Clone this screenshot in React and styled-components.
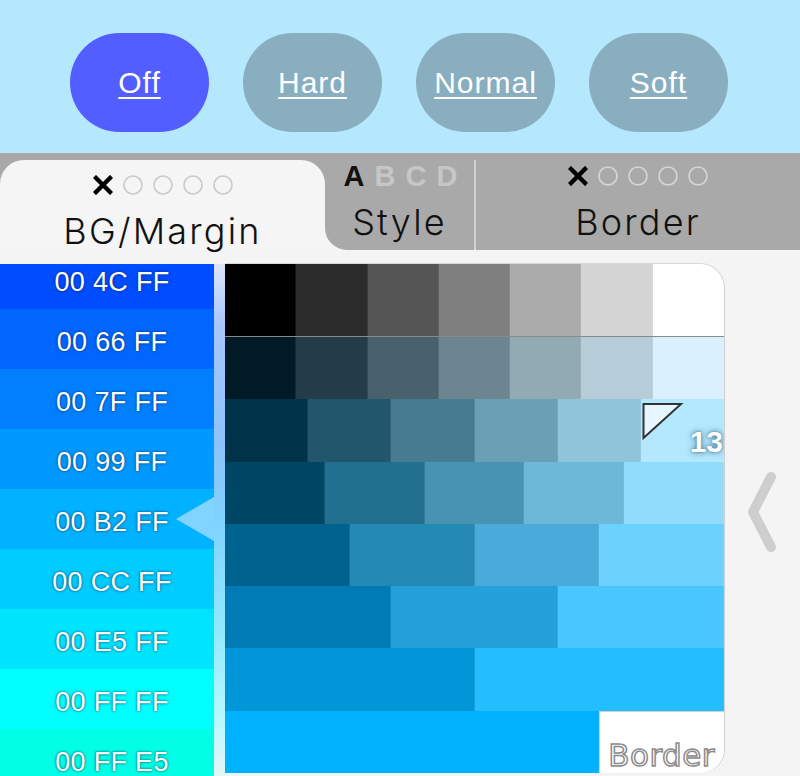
import styled, { createGlobalStyle } from 'styled-components';

const GlobalStyle = createGlobalStyle`
  html, body { margin: 0; padding: 0; }
  body {
    font-family: "Liberation Sans", Arial, sans-serif;
    background: #f4f4f4;
  }
`;

const modes = ['Off', 'Hard', 'Normal', 'Soft'];

const swatches = ['4C', '66', '7F', '99', 'B2', 'CC', 'E5', 'FF', 'FF'];
const listColors = ['#004cff', '#0066ff', '#007fff', '#0099ff', '#00b2ff', '#00ccff', '#00e5ff', '#00ffff', '#00ffe5'];

const rows = [
  ['#000000', '#2b2c2b', '#555555', '#7f7f7f', '#aaaaaa', '#d4d4d4', '#ffffff'],
  ['#011a26', '#243c49', '#48616d', '#6c8590', '#92aab4', '#b6cdd9', '#daf1fd'],
  ['#003249', '#21566d', '#467b91', '#6aa0b6', '#8fc4db', '#b3e8fe'],
  ['#004766', '#22708f', '#4793b2', '#6cb8d8', '#90dcfd'],
  ['#00628f', '#2489b5', '#49abd9', '#6dd1fe'],
  ['#007bb5', '#25a0da', '#4ac6fe'],
  ['#0096d8', '#24bdfe'],
];

function XMark() {
  return (
    <svg width="20" height="20" viewBox="0 0 20 20">
      <path d="M3 3 L17 17 M17 3 L3 17" stroke="#000" strokeWidth="4.4" strokeLinecap="square" />
    </svg>
  );
}

function Ring({ color }) {
  return (
    <svg width="20" height="20" viewBox="0 0 20 20">
      <circle cx="10" cy="10" r="9" fill="none" stroke={color} strokeWidth="1.6" />
    </svg>
  );
}

function Dots({ ring }) {
  return (
    <DotRow>
      <XMark />
      {[0, 1, 2, 3].map((i) => <Ring key={i} color={ring} />)}
    </DotRow>
  );
}

export default function App() {
  return (
    <Page>
      <GlobalStyle />
      <Header>
        {modes.map((m, i) => (
          <ModeButton key={m} $active={i === 0}>{m}</ModeButton>
        ))}
      </Header>

      <TabBar>
        <ActiveTab>
          <Dots ring="#c9c9c9" />
          <TabLabel>BG/Margin</TabLabel>
        </ActiveTab>
        <StyleTab>
          <Letters>
            <Letter $on>A</Letter>
            <Letter>B</Letter>
            <Letter>C</Letter>
            <Letter>D</Letter>
          </Letters>
          <TabLabel>Style</TabLabel>
        </StyleTab>
        <Divider />
        <BorderTab>
          <Dots ring="#d6d6d6" />
          <TabLabel>Border</TabLabel>
        </BorderTab>
      </TabBar>

      <Content>
        <List>
          <ListInner>
            {swatches.map((s, i) => (
              <ListRow key={i} $bg={listColors[i]}>
                {i === 8 ? '00 FF E5' : `00 ${s} FF`}
              </ListRow>
            ))}
          </ListInner>
        </List>
        <Strip>
          <Pointer />
        </Strip>

        <Palette>
          {rows.map((row, r) => (
            <PaletteRow key={r} $first={r === 0}>
              {row.map((c, k) => (
                <Cell key={c} $bg={c}>
                  {r === 2 && k === 5 && (
                    <>
                      <Marker width="44" height="40" viewBox="0 0 44 40">
                        <path d="M2.5 4 L40 4 L2.5 38 Z" fill="#e6f6ff" stroke="#333" strokeWidth="2" strokeLinejoin="miter" />
                      </Marker>
                      <Count>13</Count>
                    </>
                  )}
                </Cell>
              ))}
            </PaletteRow>
          ))}
          <PaletteRow>
            <Cell $bg="#00b1fe" $grow={3} />
            <BorderCell>Border</BorderCell>
          </PaletteRow>
        </Palette>

        <Side>
          <svg width="34" height="90" viewBox="0 0 34 90">
            <polyline points="26,10 8,45 26,80" fill="none" stroke="#cecece" strokeWidth="10" strokeLinecap="round" strokeLinejoin="round" />
          </svg>
        </Side>
      </Content>
    </Page>
  );
}

const Page = styled.div`
  width: 800px;
  height: 776px;
  overflow: hidden;
  display: flex;
  flex-direction: column;
  background: #f4f4f4;
`;

const Header = styled.div`
  height: 153px;
  flex: none;
  box-sizing: border-box;
  background: #b6e8fd;
  display: flex;
  justify-content: center;
  align-items: flex-start;
  gap: 34px;
  padding: 33px 2px 0 0;
`;

const ModeButton = styled.div`
  width: 139px;
  height: 99px;
  border-radius: 50px;
  background: ${(p) => (p.$active ? '#525eff' : '#88aebf')};
  color: #fff;
  display: flex;
  align-items: center;
  justify-content: center;
  font-size: 30px;
  letter-spacing: 1px;
  text-decoration: underline;
  text-decoration-thickness: 2px;
  text-underline-offset: 4px;
`;

const TabBar = styled.div`
  height: 97px;
  flex: none;
  display: flex;
  background: linear-gradient(#a9a9a9 50%, #f5f5f5 50%);
`;

const ActiveTab = styled.div`
  width: 325px;
  margin-top: 7px;
  border-radius: 24px 24px 0 0;
  background: #f5f5f5;
  display: flex;
  flex-direction: column;
  align-items: center;
  padding-top: 15px;
  box-sizing: border-box;
`;

const StyleTab = styled.div`
  width: 149px;
  background: #a9a9a9;
  border-bottom-left-radius: 22px;
  display: flex;
  flex-direction: column;
  align-items: center;
  padding-top: 13px;
  box-sizing: border-box;
`;

const Divider = styled.div`
  width: 2px;
  margin-top: 7px;
  background: #d0d0d0;
  margin-bottom: 1px;
`;

const BorderTab = styled.div`
  flex: 1;
  background: #a9a9a9;
  display: flex;
  flex-direction: column;
  align-items: center;
  padding-top: 13px;
  box-sizing: border-box;
`;

const DotRow = styled.div`
  display: flex;
  gap: 10px;
  height: 20px;
`;

const Letters = styled.div`
  display: flex;
  height: 20px;
  align-items: center;
  margin-left: 2px;
`;

const Letter = styled.span`
  width: 31px;
  text-align: center;
  font-size: 29px;
  font-weight: bold;
  line-height: 20px;
  color: ${(p) => (p.$on ? '#111' : '#c6c6c6')};
`;

const TabLabel = styled.div`
  margin-top: 16px;
  font-family: Inter, "Liberation Sans", sans-serif;
  font-weight: 300;
  font-size: 36px;
  line-height: 40px;
  letter-spacing: 2.2px;
  color: #111;
`;

const Content = styled.div`
  flex: 1;
  min-height: 0;
  display: flex;
  padding-top: 14px;
`;

const List = styled.div`
  width: 214px;
  flex: none;
  overflow: hidden;
  box-shadow: inset 0 1px 0 #5a7dff;
`;

const ListInner = styled.div`
  margin-top: -15px;
`;

const ListRow = styled.div`
  height: 60px;
  background: ${(p) => p.$bg};
  display: flex;
  align-items: center;
  justify-content: center;
  padding: 6px 0 0 10px;
  box-sizing: border-box;
  color: #fff;
  font-size: 27px;
  letter-spacing: 0.3px;
  text-shadow: 0 0 3px rgba(0, 40, 90, 0.75), 0 0 1px rgba(0, 40, 90, 0.6);
`;

const Strip = styled.div`
  width: 11px;
  flex: none;
  position: relative;
  background: linear-gradient(#dde6f8 0%, #a6c6ff 12%, #8cc2ff 35%, #7fd2ff 50%, #92eaff 72%, #b4f8ff 88%, #e4f6f8 100%);
`;

const Pointer = styled.div`
  position: absolute;
  top: 233px;
  left: -38px;
  width: 0;
  height: 0;
  border-right: 38px solid #80d4ff;
  border-top: 22px solid transparent;
  border-bottom: 22px solid transparent;
`;

const Palette = styled.div`
  width: 499px;
  flex: none;
  height: 509px;
  display: flex;
  flex-direction: column;
  border-radius: 0 24px 24px 0;
  overflow: hidden;
  box-shadow: 1px 0 0 #cfcfcf, 0 -1px 0 #d8d8d8;
`;

const PaletteRow = styled.div`
  display: flex;
  flex: ${(p) => (p.$first ? '0 0 72px' : '1')};
  border-bottom: ${(p) => (p.$first ? '1px solid #8a8a8a' : 'none')};
`;

const Cell = styled.div`
  flex: ${(p) => p.$grow || 1};
  position: relative;
  background: ${(p) => p.$bg};
  box-shadow: inset -1px 0 0 rgba(255, 255, 255, 0.08);
`;

const Marker = styled.svg`
  position: absolute;
  left: 0;
  top: 1px;
`;

const Count = styled.span`
  position: absolute;
  right: 1px;
  bottom: 3px;
  color: #fff;
  font-size: 30px;
  font-weight: bold;
  text-shadow: 0 0 6px rgba(40, 80, 110, 0.8), 0 0 2px rgba(40, 80, 110, 0.6);
`;

const BorderCell = styled.div`
  flex: 1;
  background: #fff;
  box-shadow: inset 1px 1px 0 #d0d0d0;
  display: flex;
  align-items: flex-end;
  justify-content: center;
  padding-bottom: 1px;
  font-family: "DejaVu Sans", "Liberation Sans", sans-serif;
  font-size: 31px;
  line-height: 34px;
  letter-spacing: 0.5px;
  color: #fff;
  -webkit-text-stroke: 1.5px #8c8c8c;
`;

const Side = styled.div`
  flex: 1;
  display: flex;
  align-items: center;
  justify-content: center;
  padding-bottom: 16px;
`;
